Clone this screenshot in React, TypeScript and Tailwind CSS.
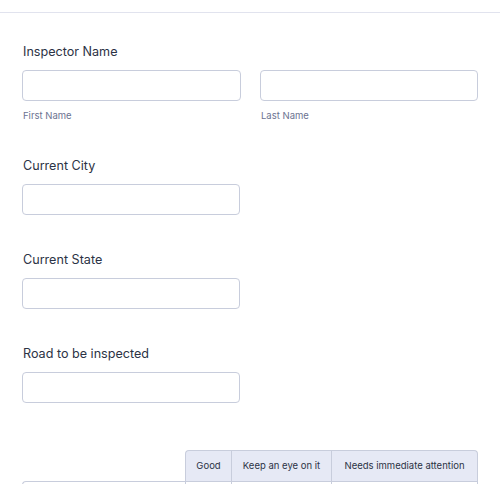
import React from "react";

function Label({ children }: { children: React.ReactNode }) {
  return <div className="h-4 pl-px text-[12.6px] leading-4 font-normal text-[#2c3345] mb-[10px]">{children}</div>;
}

function Input({ className = "" }: { className?: string }) {
  return <div className={`h-[31px] rounded-[4px] border border-[#c8cddc] bg-white ${className}`} />;
}

export default function App() {
  return (
    <div className="w-[500px] h-[484px] overflow-hidden bg-white" style={{ fontFamily: "Inter, 'Liberation Sans', sans-serif" }}>
      <div className="h-[13px] border-b border-[#e1e3ee]" />
      <div className="px-[22px] pt-[31px]">
        <Label>Inspector Name</Label>
        <div className="grid grid-cols-2 gap-x-[18px]">
          <div>
            <Input />
            <div className="mt-[9px] pl-px text-[9.5px] leading-3 text-[#6c7391]">First Name</div>
          </div>
          <div>
            <Input className="ml-px" />
            <div className="mt-[9px] pl-[2px] text-[9.5px] leading-3 text-[#6c7391]">Last Name</div>
          </div>
        </div>

        <div className="mt-[36px]">
          <Label>Current City</Label>
          <Input className="w-[218px]" />
        </div>

        <div className="mt-[37px]">
          <Label>Current State</Label>
          <Input className="w-[218px]" />
        </div>

        <div className="mt-[37px]">
          <Label>Road to be inspected</Label>
          <Input className="w-[218px]" />
        </div>

        <div className="mt-[47px] grid grid-cols-[163px_46px_100px_147px] text-[9.5px] text-[#2c3345]">
          <div />
          <div className="h-[31px] flex items-center justify-center bg-[#e6e9f5] border-t border-l border-[#c8cddc] rounded-tl-[4px]">Good</div>
          <div className="h-[31px] flex items-center justify-center bg-[#e6e9f5] border-t border-l border-[#c8cddc]">Keep an eye on it</div>
          <div className="h-[31px] flex items-center justify-center bg-[#e6e9f5] border-t border-l border-r border-[#c8cddc] rounded-tr-[4px]">Needs immediate attention</div>
          <div className="h-8 border-t border-l border-[#c8cddc] rounded-tl-[4px]" />
          <div className="h-8 border-t border-l border-[#c8cddc]" />
          <div className="h-8 border-t border-l border-[#c8cddc]" />
          <div className="h-8 border-t border-l border-r border-[#c8cddc]" />
        </div>
      </div>
    </div>
  );
}
